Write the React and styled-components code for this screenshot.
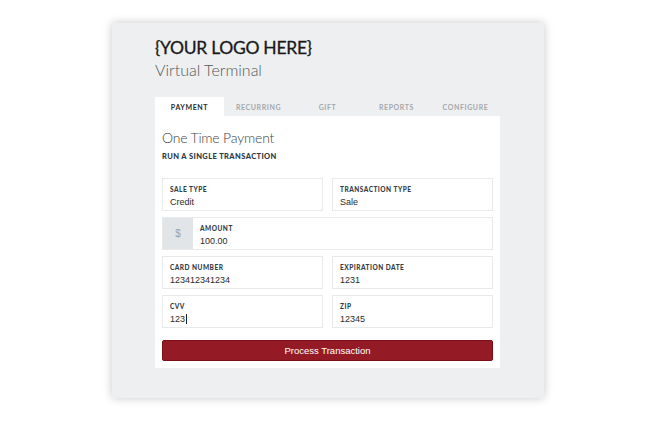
import styled, { createGlobalStyle } from "styled-components";

const tabs = ["Payment", "Recurring", "Gift", "Reports", "Configure"];

export default function App() {
    return (
        <Page>
            <GlobalStyle />
            <Panel>
                <Logo>{"{YOUR LOGO HERE}"}</Logo>
                <Subtitle>Virtual Terminal</Subtitle>
                <Tabs>
                    {tabs.map((t, i) => (
                        <Tab key={t} $active={i === 0}>{t}</Tab>
                    ))}
                </Tabs>
                <Card>
                    <Title>One Time Payment</Title>
                    <Caption>Run a single transaction</Caption>
                    <Grid>
                        <Field>
                            <Label>Sale Type</Label>
                            <Value>Credit</Value>
                        </Field>
                        <Field>
                            <Label>Transaction Type</Label>
                            <Value>Sale</Value>
                        </Field>
                        <Field $wide $addon>
                            <Addon>$</Addon>
                            <FieldBody>
                                <Label>Amount</Label>
                                <Value>100.00</Value>
                            </FieldBody>
                        </Field>
                        <Field>
                            <Label>Card Number</Label>
                            <Value>123412341234</Value>
                        </Field>
                        <Field>
                            <Label>Expiration Date</Label>
                            <Value>1231</Value>
                        </Field>
                        <Field>
                            <Label>CVV</Label>
                            <Value>123<Caret /></Value>
                        </Field>
                        <Field>
                            <Label>Zip</Label>
                            <Value>12345</Value>
                        </Field>
                    </Grid>
                    <Button>Process Transaction</Button>
                </Card>
            </Panel>
        </Page>
    );
}

const GlobalStyle = createGlobalStyle`
    * { box-sizing: border-box; }
    body {
        margin: 0;
        background: #ffffff;
        font-family: 'Lato', 'Liberation Sans', sans-serif;
    }
`
const Page = styled.div`
    width: 658px;
    height: 422px;
    padding: 23px 0 0 112px;
`
const Panel = styled.div`
    width: 432px;
    height: 375px;
    background: #eeeff1;
    box-shadow: 0 0 9px rgba(0, 0, 0, 0.22);
    padding: 14px 44px 0 43px;
    display: flex;
    flex-direction: column;
`
const Logo = styled.div`
    font-size: 17.5px;
    font-weight: 400;
    color: #1a1a1a;
    line-height: 22px;
    letter-spacing: -0.3px;
    -webkit-text-stroke: 0.3px #1a1a1a;
`
const Subtitle = styled.div`
    font-size: 16px;
    font-weight: 300;
    color: #505a60;
    line-height: 20px;
    margin-top: 1px;
`
const Tabs = styled.div`
    display: grid;
    grid-template-columns: repeat(5, 1fr);
    margin-top: 17px;
`
const Tab = styled.div`
    height: 19px;
    display: flex;
    align-items: center;
    justify-content: center;
    font-size: 7px;
    font-weight: 700;
    letter-spacing: 0.6px;
    text-transform: uppercase;
    color: ${p => p.$active ? "#2b2b2b" : "#a3a8ad"};
    background: ${p => p.$active ? "#ffffff" : "transparent"};
`
const Card = styled.div`
    background: #ffffff;
    height: 252px;
    padding: 12px 7px 0 7px;
    display: flex;
    flex-direction: column;
`
const Title = styled.div`
    font-size: 14px;
    font-weight: 300;
    color: #3d4347;
    line-height: 20px;
    letter-spacing: -0.2px;
`
const Caption = styled.div`
    font-size: 7.5px;
    font-weight: 900;
    color: #2c3a46;
    text-transform: uppercase;
    letter-spacing: 0.4px;
    margin-top: 4px;
`
const Grid = styled.div`
    display: grid;
    grid-template-columns: 1fr 1fr;
    gap: 6px 9px;
    margin-top: 17px;
`
const Field = styled.div`
    grid-column: ${p => p.$wide ? "1 / span 2" : "auto"};
    height: 33px;
    border: 1px solid #e8e9ea;
    padding: ${p => p.$addon ? "0" : "7px 7px 0 7px"};
    display: flex;
    flex-direction: ${p => p.$addon ? "row" : "column"};
`
const FieldBody = styled.div`
    display: flex;
    flex-direction: column;
    padding: 7px 7px 0 7px;
`
const Addon = styled.div`
    width: 30px;
    background: #e2e5e8;
    color: #9aa0a5;
    font-family: 'Liberation Sans', Arial, sans-serif;
    font-size: 10px;
    display: flex;
    align-items: center;
    justify-content: center;
`
const Label = styled.div`
    font-size: 6.5px;
    font-weight: 900;
    text-transform: uppercase;
    letter-spacing: 0.5px;
    color: #333d45;
    line-height: 8px;
`
const Value = styled.div`
    font-family: 'Liberation Sans', Arial, sans-serif;
    font-size: 9px;
    color: #2a2a2a;
    line-height: 12px;
    margin-top: 2px;
    display: flex;
    align-items: center;
`
const Caret = styled.span`
    width: 1px;
    height: 10px;
    background: #222;
    margin-left: 0.5px;
`
const Button = styled.button`
    margin-top: 12px;
    height: 21px;
    width: 100%;
    background: #941b25;
    border: 1px solid #7a0f18;
    border-radius: 2px;
    color: #ffffff;
    font-family: 'Liberation Sans', Arial, sans-serif;
    font-size: 9.5px;
    padding: 0;
`
